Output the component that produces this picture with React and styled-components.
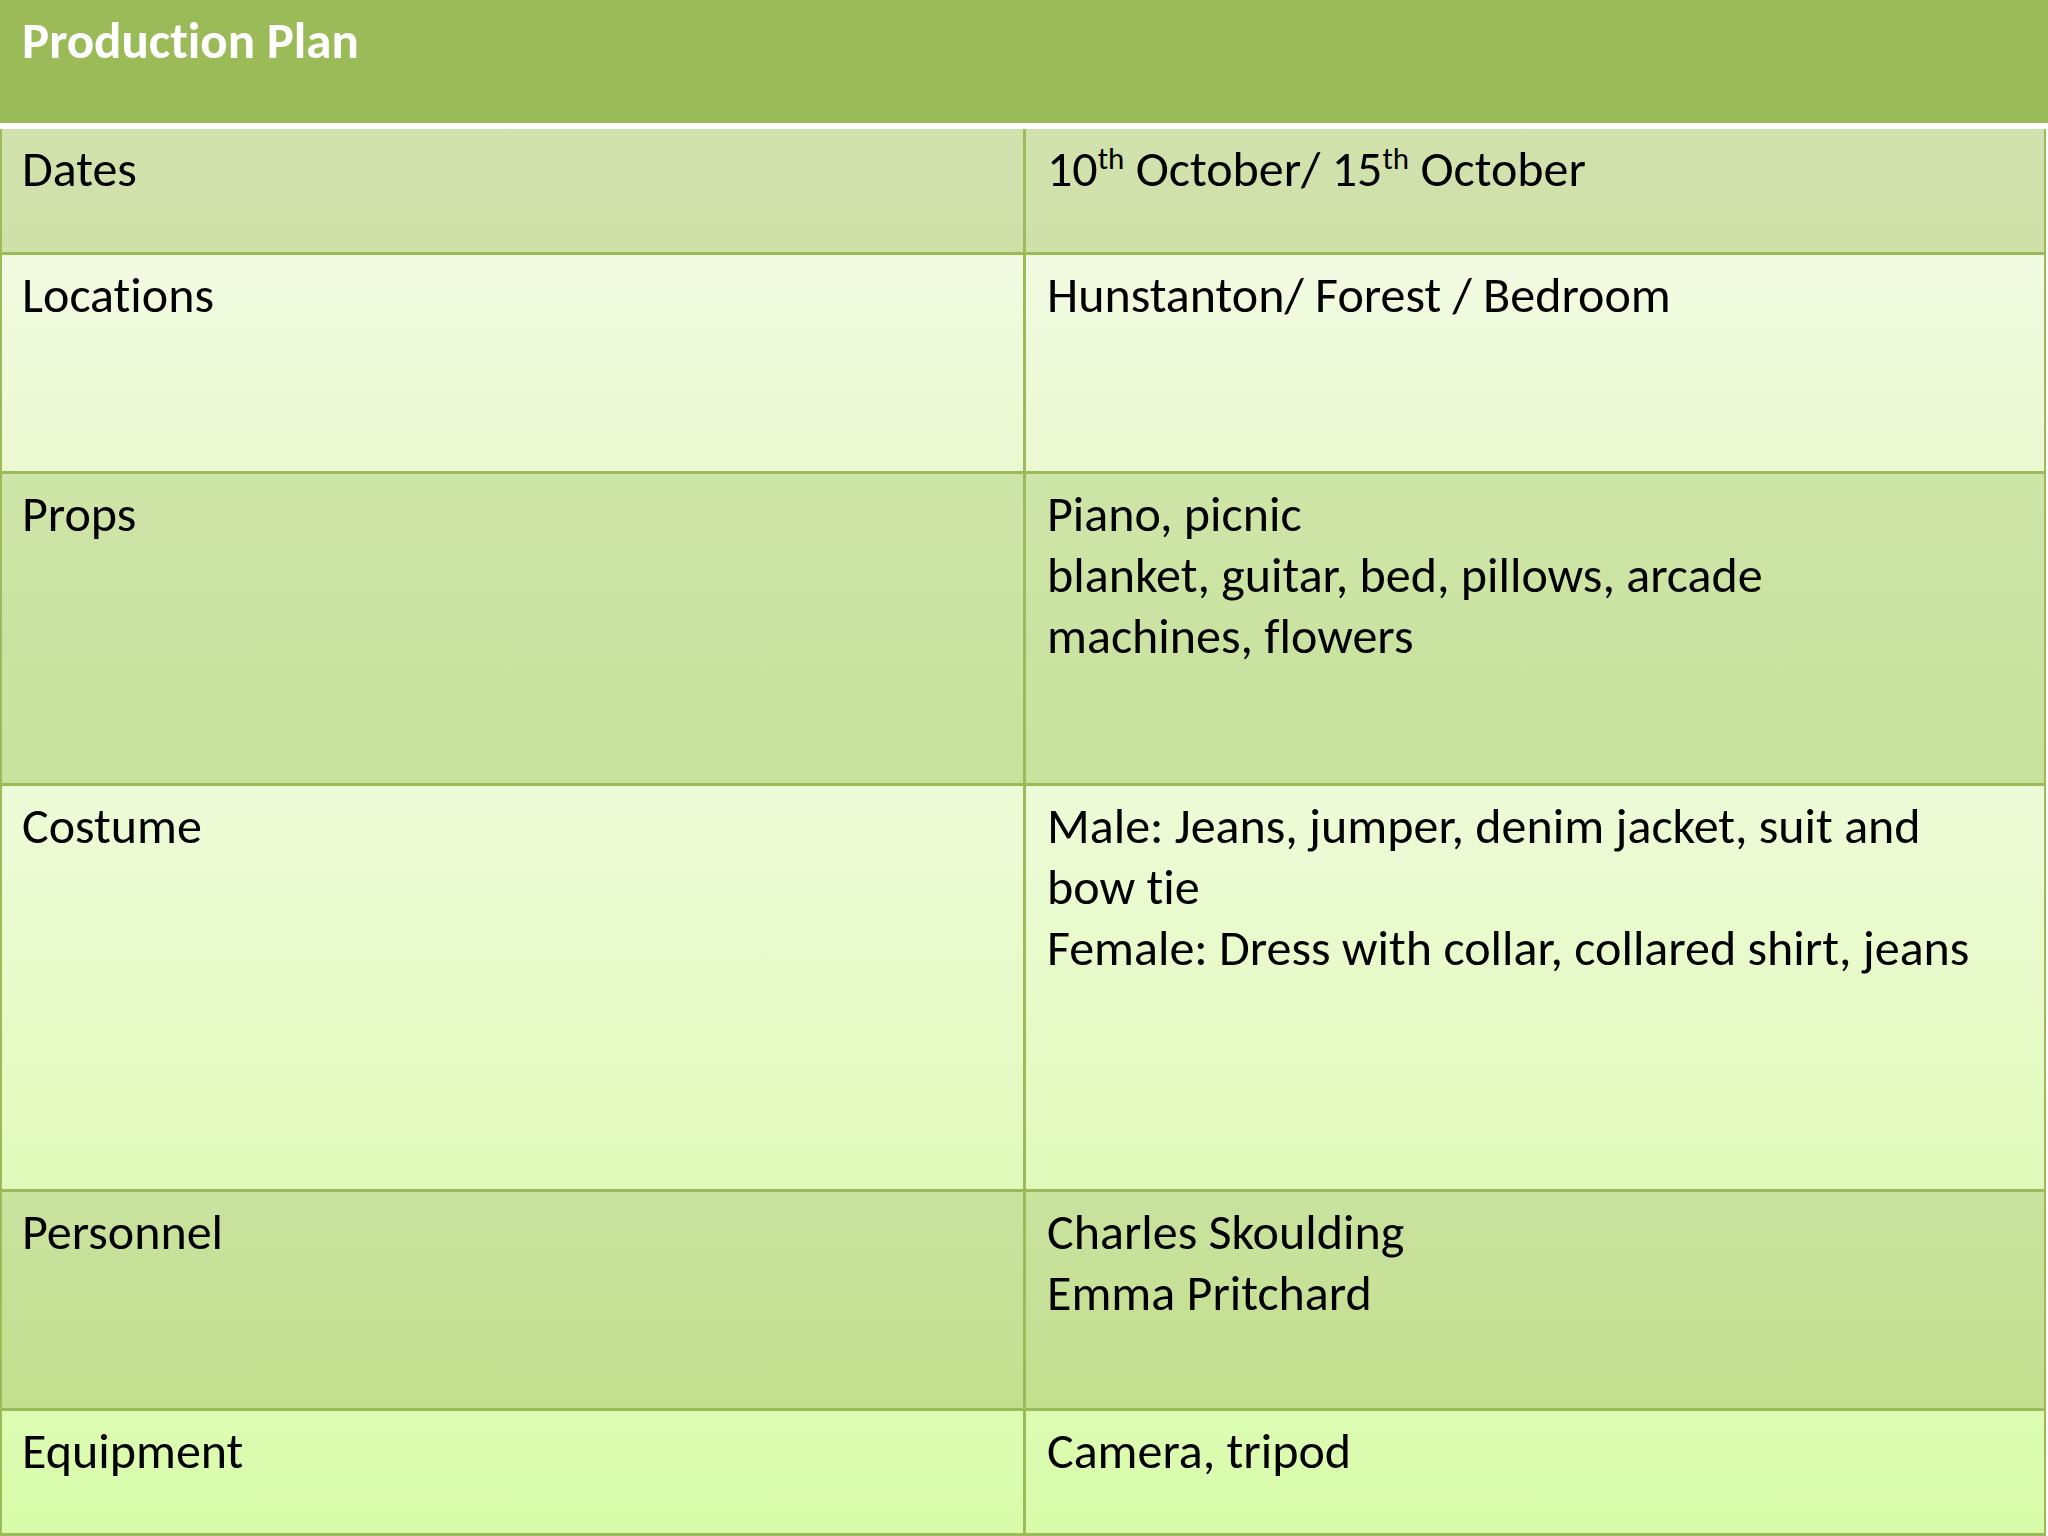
import styled, { createGlobalStyle } from "styled-components";

const GlobalStyle = createGlobalStyle`
  html, body {
    margin: 0;
    padding: 0;
    background: #ffffff;
  }
  body {
    font-family: "Carlito", "Lato", "Open Sans", sans-serif;
    font-variant-ligatures: none;
    color: #000000;
  }
`;

const rows = [
  { label: "Dates", height: 126, top: "#d2e2ae", bottom: "#cfe0a8", lines: ["__dates__"] },
  { label: "Locations", height: 219, top: "#f2fbe2", bottom: "#ebf8d0", lines: ["Hunstanton/ Forest / Bedroom"] },
  {
    label: "Props",
    height: 312,
    top: "#cee5a8",
    bottom: "#c8e19c",
    lines: ["Piano, picnic", "blanket, guitar, bed, pillows, arcade", "machines, flowers"],
  },
  {
    label: "Costume",
    height: 406,
    top: "#eefbd8",
    bottom: "#e1f9ba",
    lines: [
      "Male: Jeans, jumper, denim jacket, suit and",
      "bow tie",
      "Female: Dress with collar, collared shirt, jeans",
    ],
  },
  { label: "Personnel", height: 219, top: "#c9e29f", bottom: "#c3df8e", lines: ["Charles Skoulding", "Emma Pritchard"] },
  { label: "Equipment", height: 125, top: "#dcfcb2", bottom: "#d9fcaa", lines: ["Camera, tripod"] },
];

function DateText() {
  return (
    <>
      10<Sup>th</Sup> October/ 15<Sup>th</Sup> October
    </>
  );
}

export default function App() {
  return (
    <Page>
      <GlobalStyle />
      <Header>
        <Title>Production Plan</Title>
      </Header>
      <Table>
        {rows.map((row) => (
          <Row key={row.label} $height={row.height} $top={row.top} $bottom={row.bottom}>
            <Cell>
              <Line>{row.label}</Line>
            </Cell>
            <Cell $divider>
              {row.lines.map((line) => (
                <Line key={line}>{line === "__dates__" ? <DateText /> : line}</Line>
              ))}
            </Cell>
          </Row>
        ))}
      </Table>
    </Page>
  );
}

const Page = styled.div`
  width: 2048px;
  height: 1536px;
  overflow: hidden;
  background: #ffffff;
`;

const Header = styled.div`
  height: 129px;
  background: #9bbb59;
  border-bottom: 6px solid #ffffff;
  padding: 11px 0 0 22px;
  box-sizing: border-box;
`;

const Title = styled.h1`
  margin: 0;
  font-size: 51px;
  line-height: 60px;
  font-weight: 700;
  color: #ffffff;
`;

const Table = styled.div`
  width: 2046px;
  box-sizing: border-box;
  border-left: 2px solid #9bbb59;
  border-right: 2px solid #9bbb59;
`;

const Row = styled.div`
  display: grid;
  grid-template-columns: 1021px 1fr;
  height: ${({ $height }) => $height}px;
  box-sizing: border-box;
  border-bottom: 3px solid #9bbb59;
  background: linear-gradient(${({ $top }) => $top}, ${({ $bottom }) => $bottom});
`;

const Cell = styled.div`
  padding: 9px 0 0 ${({ $divider }) => ($divider ? "21px" : "20px")};
  border-left: ${({ $divider }) => ($divider ? "3px solid #9bbb59" : "none")};
  overflow: hidden;
`;

const Line = styled.div`
  font-size: 50px;
  line-height: 61px;
  white-space: nowrap;
`;

const Sup = styled.sup`
  font-size: 0.62em;
  line-height: 0;
  vertical-align: 0;
  position: relative;
  top: -0.55em;
`;
